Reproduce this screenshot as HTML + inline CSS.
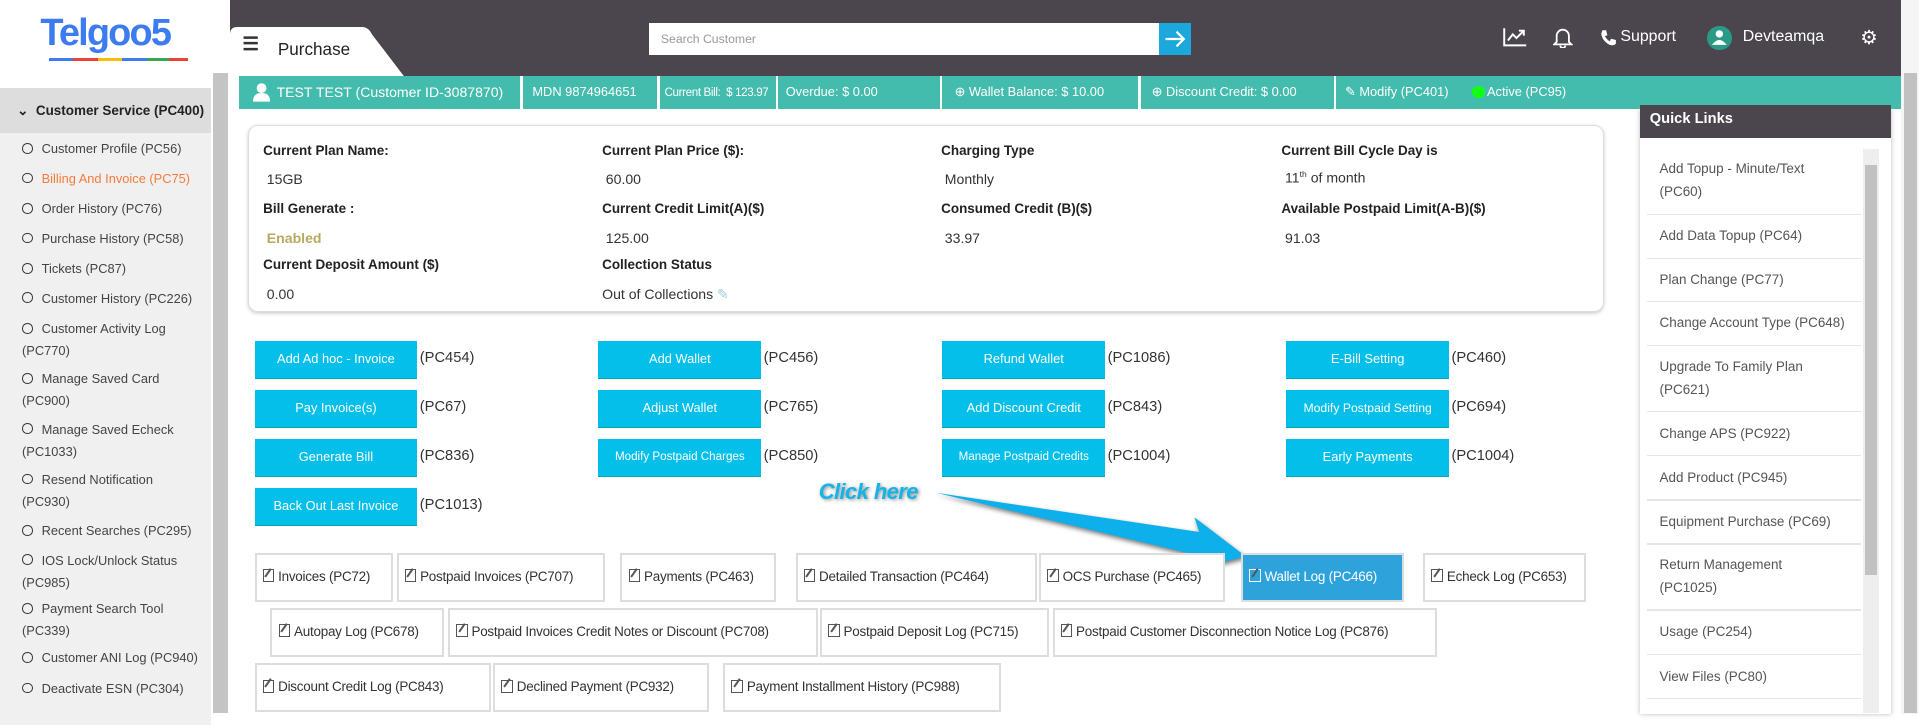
<!DOCTYPE html>
<html><head><meta charset="utf-8">
<style>
html{zoom:1.22385}
body{margin:0;width:1568px;height:583px;overflow:hidden;position:relative;background:#fff;font-family:"Liberation Sans",sans-serif;color:#333;font-size:12px}
.a{position:absolute;white-space:nowrap}
.side{left:0;top:72px;width:172px;height:520px;background:#f0f0f0}
.mi{position:absolute;left:18px;font-size:10.5px;color:#444;line-height:18px;white-space:nowrap}
.mi:before{content:"";position:absolute;left:0;top:4px;width:7px;height:7px;border:1.6px solid #333;border-radius:50%}
.mi span{padding-left:16px}
.bar{left:195px;top:62px;width:1358px;height:27px;background:#43bbad;color:#fff;font-size:10.5px}
.sep{position:absolute;top:0;width:2px;height:27px;background:#fff}
.lbl{font-weight:bold;font-size:11px;color:#222}
.val{font-size:11.5px;color:#333}
.btn{position:absolute;width:133px;height:30px;background:#03bfea;color:#fff;font-size:10.5px;text-align:center;line-height:30px;border-bottom:1px solid #0aa;white-space:nowrap;overflow:hidden}
.pc{position:absolute;font-size:12px;color:#333}
.lg{position:absolute;border:2px solid #ddd;background:#fff;font-size:11px;line-height:36px;color:#333;padding-left:5px;box-sizing:border-box;height:40px;white-space:nowrap;overflow:hidden;letter-spacing:-0.2px}
.ic{display:inline-block;width:8px;height:9px;border:1px solid #555;margin-right:3px;vertical-align:-1px;position:relative}
.ic:after{content:"";position:absolute;left:3px;top:-2px;width:2px;height:8px;background:#555;transform:rotate(35deg)}
.ql{position:absolute;left:1356px;font-size:11px;color:#555;line-height:19px;white-space:nowrap}
.qs{position:absolute;left:1346px;width:175px;height:1px;background:#e5e5e5}
</style></head><body>
<div class="a" style="left:33px;top:10px;font:bold 31px 'Liberation Sans',sans-serif;color:#3d7cf0;letter-spacing:-1.5px">Telgoo5</div>
<div class="a" style="left:40px;top:47px;width:20px;height:3px;background:#3d7cf0"></div>
<div class="a" style="left:60px;top:47px;width:20px;height:3px;background:#ea4335"></div>
<div class="a" style="left:80px;top:47px;width:20px;height:3px;background:#fbbc05"></div>
<div class="a" style="left:100px;top:47px;width:20px;height:3px;background:#3d7cf0"></div>
<div class="a" style="left:120px;top:47px;width:18px;height:3px;background:#34a853"></div>
<div class="a" style="left:138px;top:47px;width:16px;height:3px;background:#ea4335"></div>
<div class="a side"></div>
<div class="a" style="left:174px;top:60px;width:12px;height:523px;background:#c4c4c4"></div>
<div class="a" style="left:0;top:72px;width:172px;height:37px;background:#ddd"></div>
<div class="a" style="left:14px;top:84px;font-size:11px;font-weight:bold;color:#222">⌄&nbsp; Customer Service (PC400)</div>
<div class="mi" style="top:113px"><span>Customer Profile (PC56)</span></div>
<div class="mi" style="top:137px;color:#f47b3c"><span>Billing And Invoice (PC75)</span></div>
<div class="mi" style="top:162px"><span>Order History (PC76)</span></div>
<div class="mi" style="top:186px"><span>Purchase History (PC58)</span></div>
<div class="mi" style="top:211px"><span>Tickets (PC87)</span></div>
<div class="mi" style="top:235px"><span>Customer History (PC226)</span></div>
<div class="mi" style="top:260px"><span>Customer Activity Log</span><br>(PC770)</div>
<div class="mi" style="top:301px"><span>Manage Saved Card</span><br>(PC900)</div>
<div class="mi" style="top:342px"><span>Manage Saved Echeck</span><br>(PC1033)</div>
<div class="mi" style="top:383px"><span>Resend Notification</span><br>(PC930)</div>
<div class="mi" style="top:425px"><span>Recent Searches (PC295)</span></div>
<div class="mi" style="top:449px"><span>IOS Lock/Unlock Status</span><br>(PC985)</div>
<div class="mi" style="top:489px"><span>Payment Search Tool</span><br>(PC339)</div>
<div class="mi" style="top:529px"><span>Customer ANI Log (PC940)</span></div>
<div class="mi" style="top:554px"><span>Deactivate ESN (PC304)</span></div>
<div class="a" style="left:188px;top:0;width:1365px;height:62px;background:#4b454d"></div>
<svg class="a" style="left:188px;top:22px" width="145" height="40"><path d="M0 40V6Q0 0 6 0H108Q113 0 116 6L142 40Z" fill="#fff"/></svg>
<div class="a" style="left:198px;top:27px;font-size:15px;font-weight:bold">☰</div>
<div class="a" style="left:227px;top:32px;font:14px 'Liberation Sans',sans-serif;color:#222">Purchase</div>
<div class="a" style="left:530px;top:19px;width:417px;height:26px;background:#fff"></div>
<div class="a" style="left:540px;top:26px;font-size:10px;color:#999">Search Customer</div>
<div class="a" style="left:947px;top:19px;width:26px;height:26px;background:#1ca8dd"></div>
<svg class="a" style="left:950px;top:23px" width="20" height="18"><path d="M2 9H17M11 3L17 9L11 15" stroke="#fff" stroke-width="1.8" fill="none"/></svg>
<svg class="a" style="left:1228px;top:22px" width="20" height="16"><path d="M1 1V15H19M4 11L8 6L11 9L17 3M13 3H17V7" stroke="#fff" stroke-width="1.6" fill="none"/></svg>
<svg class="a" style="left:1269px;top:21px" width="16" height="18"><path d="M3 13V8A5 5 0 0 1 13 8V13L15 15H1Z M6 16A2 2 0 0 0 10 16" stroke="#fff" stroke-width="1.5" fill="none"/></svg>
<svg class="a" style="left:1307px;top:24px" width="14" height="14"><path d="M2 1L5 1L6 5L4 6Q6 9 8 10L9 8L13 9L13 12Q11 14 8 13Q2 10 1 4Z" fill="#fff"/></svg>
<div class="a" style="left:1324px;top:23px;font:13px 'Liberation Sans',sans-serif;color:#fff">Support</div>
<div class="a" style="left:1395px;top:21px;width:20px;height:20px;border-radius:50%;background:#2a9a86"></div>
<svg class="a" style="left:1399px;top:24px" width="12" height="14"><circle cx="6" cy="4" r="3" fill="#fff"/><path d="M0 13Q6 5 12 13Z" fill="#fff"/></svg>
<div class="a" style="left:1424px;top:23px;font:13px 'Liberation Sans',sans-serif;color:#fff">Devteamqa</div>
<div class="a" style="left:1520px;top:21px;font-size:16px;color:#fff">⚙</div>
<div class="a" style="left:1553px;top:0;width:15px;height:583px;background:#f5f5f5"></div>
<div class="a" style="left:1556px;top:60px;width:10px;height:523px;background:#c1c1c1"></div>
<div class="a bar">
<div class="sep" style="left:230px"></div><div class="sep" style="left:342px"></div><div class="sep" style="left:439px"></div><div class="sep" style="left:573px"></div><div class="sep" style="left:735px"></div><div class="sep" style="left:895px"></div>
<svg class="a" style="left:12px;top:5px" width="14" height="16"><circle cx="7" cy="5" r="4" fill="#fff"/><path d="M0 16Q0 9 7 9Q14 9 14 16Z" fill="#fff"/></svg>
<span class="a" style="left:31px;top:7px;font-size:11.5px">TEST TEST (Customer ID-3087870)</span>
<span class="a" style="left:240px;top:7px">MDN 9874964651</span>
<span class="a" style="left:348px;top:8px;font-size:9.5px;letter-spacing:-0.3px">Current Bill:&nbsp; $ 123.97</span>
<span class="a" style="left:447px;top:7px">Overdue: $ 0.00</span>
<span class="a" style="left:585px;top:7px">⊕ Wallet Balance: $ 10.00</span>
<span class="a" style="left:746px;top:7px">⊕ Discount Credit: $ 0.00</span>
<span class="a" style="left:904px;top:7px">✎ Modify (PC401)</span>
<span class="a" style="left:1008px;top:8px;width:10px;height:10px;border-radius:50%;background:#1f1"></span>
<span class="a" style="left:1020px;top:7px">Active (PC95)</span>
</div>
<div class="a" style="left:203px;top:102px;width:1106px;height:151px;border:1px solid #ddd;border-radius:8px;box-shadow:0 1px 3px #ccc"></div>
<div class="a lbl" style="left:215px;top:117px">Current Plan Name:</div>
<div class="a val" style="left:218px;top:140px">15GB</div>
<div class="a lbl" style="left:215px;top:164px">Bill Generate :</div>
<div class="a val" style="left:218px;top:188px;color:#b8a960;font-weight:bold">Enabled</div>
<div class="a lbl" style="left:215px;top:210px">Current Deposit Amount ($)</div>
<div class="a val" style="left:218px;top:234px">0.00</div>
<div class="a lbl" style="left:492px;top:117px">Current Plan Price ($):</div>
<div class="a val" style="left:495px;top:140px">60.00</div>
<div class="a lbl" style="left:492px;top:164px">Current Credit Limit(A)($)</div>
<div class="a val" style="left:495px;top:188px">125.00</div>
<div class="a lbl" style="left:492px;top:210px">Collection Status</div>
<div class="a val" style="left:492px;top:234px">Out of Collections <span style="color:#9cd">✎</span></div>
<div class="a lbl" style="left:769px;top:117px">Charging Type</div>
<div class="a val" style="left:772px;top:140px">Monthly</div>
<div class="a lbl" style="left:769px;top:164px">Consumed Credit (B)($)</div>
<div class="a val" style="left:772px;top:188px">33.97</div>
<div class="a lbl" style="left:1047px;top:117px">Current Bill Cycle Day is</div>
<div class="a val" style="left:1050px;top:138px">11<sup style="font-size:7px">th</sup> of month</div>
<div class="a lbl" style="left:1047px;top:164px">Available Postpaid Limit(A-B)($)</div>
<div class="a val" style="left:1050px;top:188px">91.03</div>
<div class="a" style="left:1340px;top:89px;width:205px;height:494px;background:#fff;box-shadow:0 0 4px #bbb"></div>
<div class="a" style="left:1340px;top:86px;width:205px;height:27px;background:#4b454d"></div>
<div class="a" style="left:1348px;top:91px;font-size:12px;font-weight:bold;color:#fff">Quick Links</div>
<div class="a" style="left:1522px;top:122px;width:13px;height:461px;background:#eee"></div>
<div class="a" style="left:1524px;top:135px;width:10px;height:335px;background:#c1c1c1"></div>
<div class="ql" style="top:128px">Add Topup - Minute/Text<br>(PC60)</div><div class="qs" style="top:175px"></div>
<div class="ql" style="top:183px">Add Data Topup (PC64)</div><div class="qs" style="top:211px"></div>
<div class="ql" style="top:219px">Plan Change (PC77)</div><div class="qs" style="top:246px"></div>
<div class="ql" style="top:254px">Change Account Type (PC648)</div><div class="qs" style="top:282px"></div>
<div class="ql" style="top:290px">Upgrade To Family Plan<br>(PC621)</div><div class="qs" style="top:336px"></div>
<div class="ql" style="top:345px">Change APS (PC922)</div><div class="qs" style="top:372px"></div>
<div class="ql" style="top:381px">Add Product (PC945)</div><div class="qs" style="top:408px"></div>
<div class="ql" style="top:417px">Equipment Purchase (PC69)</div><div class="qs" style="top:444px"></div>
<div class="ql" style="top:452px">Return Management<br>(PC1025)</div><div class="qs" style="top:498px"></div>
<div class="ql" style="top:507px">Usage (PC254)</div><div class="qs" style="top:534px"></div>
<div class="ql" style="top:543px">View Files (PC80)</div><div class="qs" style="top:570px"></div>
<div class="btn" style="left:208px;top:279px">Add Ad hoc - Invoice</div><div class="pc" style="left:343px;top:286px">(PC454)</div>
<div class="btn" style="left:489px;top:279px">Add Wallet</div><div class="pc" style="left:624px;top:286px">(PC456)</div>
<div class="btn" style="left:770px;top:279px">Refund Wallet</div><div class="pc" style="left:905px;top:286px">(PC1086)</div>
<div class="btn" style="left:1051px;top:279px">E-Bill Setting</div><div class="pc" style="left:1186px;top:286px">(PC460)</div>
<div class="btn" style="left:208px;top:319px">Pay Invoice(s)</div><div class="pc" style="left:343px;top:326px">(PC67)</div>
<div class="btn" style="left:489px;top:319px">Adjust Wallet</div><div class="pc" style="left:624px;top:326px">(PC765)</div>
<div class="btn" style="left:770px;top:319px">Add Discount Credit</div><div class="pc" style="left:905px;top:326px">(PC843)</div>
<div class="btn" style="left:1051px;top:319px;font-size:10px">Modify Postpaid Setting</div><div class="pc" style="left:1186px;top:326px">(PC694)</div>
<div class="btn" style="left:208px;top:359px">Generate Bill</div><div class="pc" style="left:343px;top:366px">(PC836)</div>
<div class="btn" style="left:489px;top:359px;font-size:9.5px">Modify Postpaid Charges</div><div class="pc" style="left:624px;top:366px">(PC850)</div>
<div class="btn" style="left:770px;top:359px;font-size:9.5px">Manage Postpaid Credits</div><div class="pc" style="left:905px;top:366px">(PC1004)</div>
<div class="btn" style="left:1051px;top:359px">Early Payments</div><div class="pc" style="left:1186px;top:366px">(PC1004)</div>
<div class="btn" style="left:208px;top:399px">Back Out Last Invoice</div><div class="pc" style="left:343px;top:406px">(PC1013)</div>
<div class="a" style="left:669px;top:391px;font:italic bold 18px 'Liberation Sans',sans-serif;color:#14b4e8;text-shadow:1px 1px 3px #888;letter-spacing:-0.5px">Click here</div>
<svg class="a" style="left:760px;top:395px" width="270" height="80"><path d="M5 8L220 40L216 28L258 60L210 72L214 58Z" fill="#0db0ea" style="filter:drop-shadow(1px 2px 2px #777)"/></svg>
<div class="lg" style="left:208px;top:452px;width:113px"><i class="ic"></i>Invoices (PC72)</div>
<div class="lg" style="left:324px;top:452px;width:170px"><i class="ic"></i>Postpaid Invoices (PC707)</div>
<div class="lg" style="left:507px;top:452px;width:127px"><i class="ic"></i>Payments (PC463)</div>
<div class="lg" style="left:650px;top:452px;width:197px"><i class="ic"></i>Detailed Transaction (PC464)</div>
<div class="lg" style="left:849px;top:452px;width:152px"><i class="ic"></i>OCS Purchase (PC465)</div>
<div class="lg" style="left:1014px;top:452px;width:133px;background:#2ea3db;color:#fff"><i class="ic" style="border-color:#fff"></i>Wallet Log (PC466)</div>
<div class="lg" style="left:1163px;top:452px;width:133px"><i class="ic"></i>Echeck Log (PC653)</div>
<div class="lg" style="left:221px;top:497px;width:142px"><i class="ic"></i>Autopay Log (PC678)</div>
<div class="lg" style="left:366px;top:497px;width:302px"><i class="ic"></i>Postpaid Invoices Credit Notes or Discount (PC708)</div>
<div class="lg" style="left:670px;top:497px;width:187px"><i class="ic"></i>Postpaid Deposit Log (PC715)</div>
<div class="lg" style="left:860px;top:497px;width:314px"><i class="ic"></i>Postpaid Customer Disconnection Notice Log (PC876)</div>
<div class="lg" style="left:208px;top:542px;width:193px"><i class="ic"></i>Discount Credit Log (PC843)</div>
<div class="lg" style="left:403px;top:542px;width:176px"><i class="ic"></i>Declined Payment (PC932)</div>
<div class="lg" style="left:591px;top:542px;width:227px"><i class="ic"></i>Payment Installment History (PC988)</div>
</body></html>
